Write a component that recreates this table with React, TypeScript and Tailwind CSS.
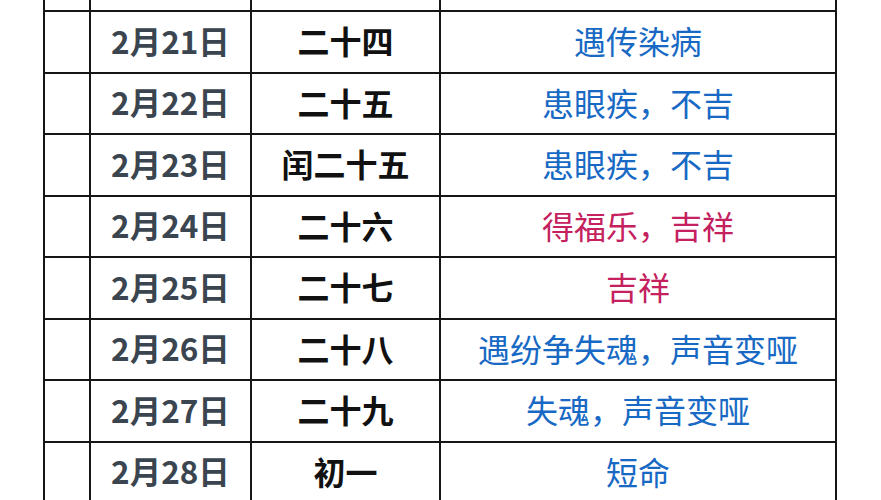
const rows = [
  { date: '', lunar: '', note: '', tone: 'blue' },
  { date: '2月21日', lunar: '二十四', note: '遇传染病', tone: 'blue' },
  { date: '2月22日', lunar: '二十五', note: '患眼疾，不吉', tone: 'blue' },
  { date: '2月23日', lunar: '闰二十五', note: '患眼疾，不吉', tone: 'blue' },
  { date: '2月24日', lunar: '二十六', note: '得福乐，吉祥', tone: 'pink' },
  { date: '2月25日', lunar: '二十七', note: '吉祥', tone: 'pink' },
  { date: '2月26日', lunar: '二十八', note: '遇纷争失魂，声音变哑', tone: 'blue' },
  { date: '2月27日', lunar: '二十九', note: '失魂，声音变哑', tone: 'blue' },
  { date: '2月28日', lunar: '初一', note: '短命', tone: 'blue' },
]

export default function App() {
  return (
    <div
      className="h-[500px] w-[881px] overflow-hidden bg-white"
      style={{ fontFamily: '"Noto Sans CJK SC", "Noto Sans", sans-serif' }}
    >
      <div className="ml-[43px] mt-[-49.5px] w-[794px]">
        {rows.map((r, i) => (
          <div key={i} className="flex h-[61.5px] border-b-2 border-[#161616]">
            <div className="w-[48px] shrink-0 border-x-2 border-[#161616]" />
            <div className="flex w-[161px] shrink-0 items-center justify-center border-r-2 border-[#161616] pb-[3px] text-[31.5px] font-bold text-[#3a4550]">
              {r.date}
            </div>
            <div className="flex w-[189px] shrink-0 items-center justify-center border-r-2 border-[#161616] pb-[3px] text-[32px] font-bold text-[#111111]">
              {r.lunar}
            </div>
            <div
              className={
                'flex w-[396px] shrink-0 items-center justify-center border-r-2 border-[#161616] pb-[3px] text-[32px] ' +
                (r.tone === 'pink' ? 'text-[#c4215e]' : 'text-[#1769c4]')
              }
            >
              {r.note}
            </div>
          </div>
        ))}
      </div>
    </div>
  )
}
